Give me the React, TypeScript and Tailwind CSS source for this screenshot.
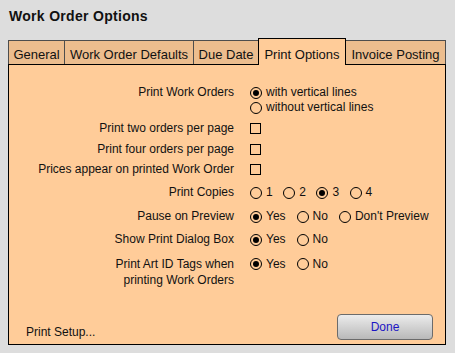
import React from "react";

const FONT = { fontFamily: '"Liberation Sans", Arial, sans-serif' };

function Radio({ checked }: { checked?: boolean }) {
  return checked ? (
    <span className="flex h-[12px] w-[12px] shrink-0 items-center justify-center rounded-full border-[1.5px] border-black">
      <span className="block h-[6px] w-[6px] rounded-full bg-black" />
    </span>
  ) : (
    <span className="block h-[12px] w-[12px] shrink-0 rounded-full border border-black" />
  );
}

function Opt({ checked, label }: { checked?: boolean; label: string }) {
  return (
    <span className="flex items-center gap-[4px]">
      <Radio checked={checked} />
      <span>{label}</span>
    </span>
  );
}

function Check() {
  return <span className="block h-[11px] w-[11px] border border-black" />;
}

function Row({
  label,
  children,
  className = "",
}: {
  label: React.ReactNode;
  children: React.ReactNode;
  className?: string;
}) {
  return (
    <div className={"flex items-start leading-[15px] " + className}>
      <div className="w-[225px] shrink-0 text-right">{label}</div>
      <div className="ml-[16px] flex h-[15px] items-center">{children}</div>
    </div>
  );
}

export default function App() {
  return (
    <div
      className="h-[353px] w-[455px] overflow-hidden bg-[#dddddd] text-[12px] text-[#111]"
      style={FONT}
    >
      <div className="h-[38px] pl-[9px] pt-[8px] text-[14px] font-bold leading-[16px] tracking-[0.3px] text-[#111]">
        Work Order Options
      </div>
      <div className="ml-[8px] w-[438px]">
        <div className="relative z-10 flex items-end text-[13px] leading-[15px]">
          <div className="flex h-[24px] w-[56px] justify-center border-l border-t border-[#4d4d4d] bg-[#ecbd8e] pt-[6px]">
            General
          </div>
          <div className="flex h-[24px] w-[129px] justify-center border-l border-t border-[#4d4d4d] bg-[#ecbd8e] pt-[6px]">
            Work Order Defaults
          </div>
          <div className="flex h-[24px] w-[65px] justify-center border-l border-t border-[#4d4d4d] bg-[#ecbd8e] pt-[6px]">
            Due Date
          </div>
          <div className="-mb-px flex h-[27px] w-[88px] justify-center border-l border-r border-t border-black bg-[#ffcc99] pt-[8px]">
            Print Options
          </div>
          <div className="flex h-[24px] w-[100px] justify-center border-r border-t border-[#4d4d4d] bg-[#ecbd8e] pt-[6px]">
            Invoice Posting
          </div>
        </div>
        <div className="flex h-[281px] flex-col border border-black bg-[#ffcc99] pt-[20px]">
          <div className="flex items-start leading-[15px]">
            <div className="w-[225px] shrink-0 text-right">Print Work Orders</div>
            <div className="ml-[16px] flex flex-col">
              <div className="flex h-[15px] items-center">
                <Opt checked label="with vertical lines" />
              </div>
              <div className="flex h-[15px] items-center">
                <Opt label="without vertical lines" />
              </div>
            </div>
          </div>
          <Row label="Print two orders per page" className="mt-[6px]">
            <Check />
          </Row>
          <Row label="Print four orders per page" className="mt-[6px]">
            <Check />
          </Row>
          <Row label="Prices appear on printed Work Order" className="mt-[5px]">
            <Check />
          </Row>
          <Row label="Print Copies" className="mt-[8px]">
            <div className="flex items-center gap-[10.5px]">
              <Opt label="1" />
              <Opt label="2" />
              <Opt checked label="3" />
              <Opt label="4" />
            </div>
          </Row>
          <Row label="Pause on Preview" className="mt-[9px]">
            <div className="flex items-center gap-[11px]">
              <Opt checked label="Yes" />
              <Opt label="No" />
              <Opt label="Don't Preview" />
            </div>
          </Row>
          <Row label="Show Print Dialog Box" className="mt-[8px]">
            <div className="flex items-center gap-[11px]">
              <Opt checked label="Yes" />
              <Opt label="No" />
            </div>
          </Row>
          <div className="mt-[9px] flex items-start leading-[16px]">
            <div className="w-[225px] shrink-0 text-right">
              Print Art ID Tags when
              <br />
              printing Work Orders
            </div>
            <div className="ml-[16px] flex h-[16px] items-center gap-[11px]">
              <Opt checked label="Yes" />
              <Opt label="No" />
            </div>
          </div>
          <div className="mt-auto flex items-end justify-between pb-[4px] pl-[17px] pr-[12px]">
            <div className="leading-[15px]">Print Setup...</div>
            <button className="flex h-[26px] w-[96px] items-center justify-center rounded-[4px] border border-[#6b6b6b] bg-gradient-to-b from-[#ececec] to-[#b9b9b9] text-[12px] text-[#1c14c4]">
              Done
            </button>
          </div>
        </div>
      </div>
    </div>
  );
}
